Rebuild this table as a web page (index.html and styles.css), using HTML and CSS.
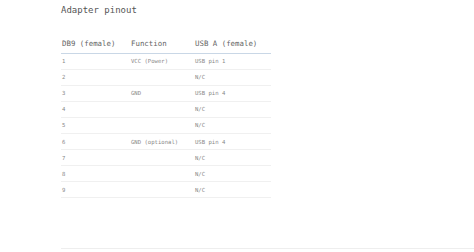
FILE: index.html
```html
<!DOCTYPE html>
<html lang="en">
<head>
    <meta charset="UTF-8">
    <title>Adapter pinout</title>
    <link rel="stylesheet" href="styles.css">
</head>
<body>
    <div class="page">
        <h2 class="title">Adapter pinout</h2>
        <table class="pinout">
            <thead>
                <tr><th>DB9 (female)</th><th>Function</th><th>USB A (female)</th></tr>
            </thead>
            <tbody>
                <tr><td>1</td><td>VCC (Power)</td><td>USB pin 1</td></tr>
                <tr><td>2</td><td></td><td>N/C</td></tr>
                <tr><td>3</td><td>GND</td><td>USB pin 4</td></tr>
                <tr><td>4</td><td></td><td>N/C</td></tr>
                <tr><td>5</td><td></td><td>N/C</td></tr>
                <tr><td>6</td><td>GND (optional)</td><td>USB pin 4</td></tr>
                <tr><td>7</td><td></td><td>N/C</td></tr>
                <tr><td>8</td><td></td><td>N/C</td></tr>
                <tr><td>9</td><td></td><td>N/C</td></tr>
            </tbody>
        </table>
        <div class="rule"></div>
    </div>
</body>
</html>
```

FILE: styles.css
```css
* {
    margin: 0;
    padding: 0;
    box-sizing: border-box;
}

body {
    background: #fff;
    font-family: "DejaVu Sans Mono", "Liberation Mono", monospace;
}

.page {
    padding: 4px 0 0 61px;
    height: 252px;
    display: flex;
    flex-direction: column;
}

.title {
    font-size: 9px;
    font-weight: normal;
    color: #555;
    line-height: 13px;
    margin-bottom: 20px;
}

.pinout {
    border-collapse: collapse;
    width: 210px;
}

.pinout th {
    text-align: left;
    font-weight: normal;
    font-size: 7.4px;
    color: #666;
    padding: 0 0 5px 1px;
    border-bottom: 1px solid #c9d7e6;
    height: 16px;
    vertical-align: bottom;
}

.pinout th:nth-child(1) { width: 69px; }
.pinout th:nth-child(2) { width: 64px; }

.pinout td {
    font-size: 5.6px;
    color: #888;
    height: 16.1px;
    padding: 0 0 0 1px;
    border-bottom: 1px solid #f0f0f0;
    vertical-align: middle;
}

.rule {
    margin-top: auto;
    margin-bottom: 3px;
    border-top: 1px solid #eee;
}
```
